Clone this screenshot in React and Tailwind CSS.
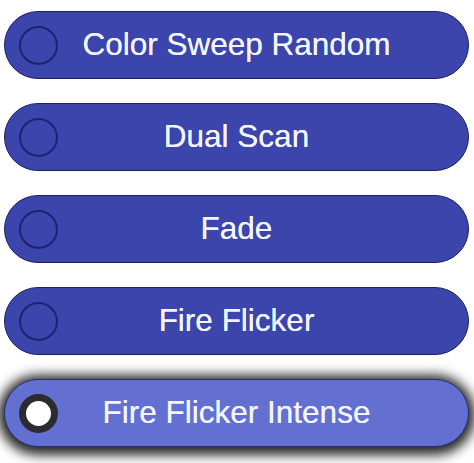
import React from "react";

const effects = [
  "Color Sweep Random",
  "Dual Scan",
  "Fade",
  "Fire Flicker",
  "Fire Flicker Intense",
];

function EffectOption({ label, selected }) {
  return (
    <button
      type="button"
      className={
        selected
          ? "grid grid-cols-[40px_1fr_40px] items-center h-[68px] w-[465px] px-[14px] rounded-full border border-[#2a306e] bg-[#6370d1] shadow-[0_2px_12px_6px_rgba(0,0,0,0.85)]"
          : "grid grid-cols-[40px_1fr_40px] items-center h-[68px] w-[465px] px-[14px] rounded-full border border-[#1c2160] bg-[#3c45ab]"
      }
    >
      {selected ? (
        <span className="block w-[39px] h-[39px] rounded-full border-[7px] border-[#2b2b30] bg-white" />
      ) : (
        <span className="block w-[39px] h-[39px] rounded-full border-2 border-[#1d2370]" />
      )}
      <span className="text-center text-[31.5px] leading-none text-[#f2f4ff] [text-shadow:0_0_0.6px_#f2f4ff] font-['Liberation_Sans',Arial,sans-serif]">
        {label}
      </span>
      <span />
    </button>
  );
}

export default function App() {
  return (
    <div className="w-[474px] h-[463px] bg-white pl-[4px] pt-[11px] flex flex-col gap-[24px]">
      {effects.map((name, i) => (
        <EffectOption key={name} label={name} selected={i === effects.length - 1} />
      ))}
    </div>
  );
}
